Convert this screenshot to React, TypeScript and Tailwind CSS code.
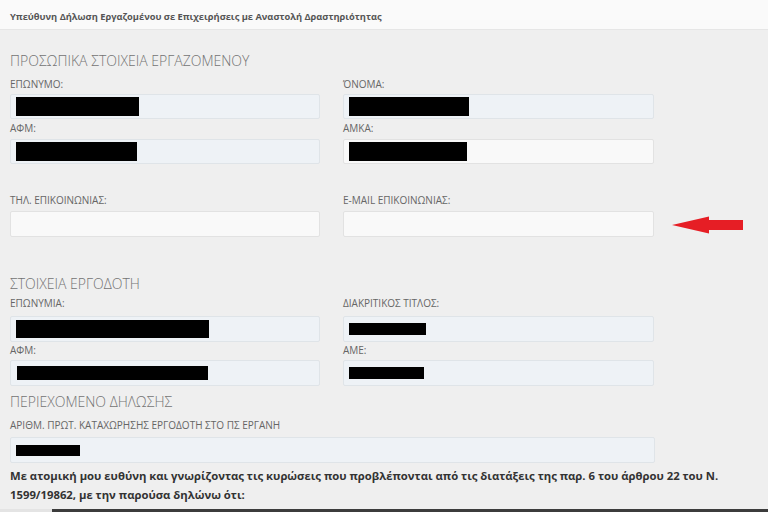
import React from "react";

const font = { fontFamily: '"Open Sans", "Noto Sans", sans-serif' };

function Label({ children, className = "" }: { children: React.ReactNode; className?: string }) {
  return (
    <div className={"text-[10px] leading-[14px] text-[#666] whitespace-nowrap " + className}>{children}</div>
  );
}

function Input({
  blue = true,
  bar,
  barH = "h-[19px]",
  className = "",
}: {
  blue?: boolean;
  bar?: string;
  barH?: string;
  className?: string;
}) {
  return (
    <div
      className={
        "flex items-center pl-[5px] rounded-[2px] border " +
        (blue ? "bg-[#eef2f6] border-[#dfe4e8] " : "bg-[#f9f9f9] border-[#e2e2e2] ") +
        className
      }
    >
      {bar && <div className={"bg-black " + bar + " " + barH} />}
    </div>
  );
}

export default function App() {
  return (
    <div className="w-[768px] h-[512px] overflow-hidden bg-[#efefef] flex flex-col" style={font}>
      <div className="h-[30px] shrink-0 bg-[#fafafa] border-b border-[#e6e6e6] flex items-center pl-[10px] pt-[4px]">
        <span className="text-[9.3px] font-bold text-[#555] whitespace-nowrap">
          Υπεύθυνη Δήλωση Εργαζομένου σε Επιχειρήσεις με Αναστολή Δραστηριότητας
        </span>
      </div>

      <div className="pl-[10px] w-[655px] flex flex-col">
        <div className="mt-[21px] h-[20px] leading-[20px] text-[14px] font-light text-[#737373] whitespace-nowrap">
          ΠΡΟΣΩΠΙΚΑ ΣΤΟΙΧΕΙΑ ΕΡΓΑΖΟΜΕΝΟΥ
        </div>

        <div className="grid grid-cols-[310px_311px] gap-x-[23px]">
          <div className="flex flex-col">
            <Label className="mt-[6px]">ΕΠΩΝΥΜΟ:</Label>
            <Input className="mt-[3px] h-[25px]" bar="w-[123px]" />
            <Label className="mt-[2px]">ΑΦΜ:</Label>
            <Input className="mt-[4px] h-[25px]" bar="w-[121px]" />
            <Label className="mt-[29px]">ΤΗΛ. ΕΠΙΚΟΙΝΩΝΙΑΣ:</Label>
            <Input className="mt-[4px] h-[26px]" blue={false} />
          </div>
          <div className="flex flex-col">
            <Label className="mt-[6px]">ΌΝΟΜΑ:</Label>
            <Input className="mt-[3px] h-[25px] pl-[4px]" bar="w-[120px]" />
            <Label className="mt-[2px]">ΑΜΚΑ:</Label>
            <Input className="mt-[4px] h-[25px] pl-[4px]" bar="w-[118px]" blue={false} />
            <Label className="mt-[29px]">E-MAIL ΕΠΙΚΟΙΝΩΝΙΑΣ:</Label>
            <div className="relative mt-[4px]">
              <Input className="h-[26px]" blue={false} />
              <svg
                className="absolute left-[329px] top-[5px]"
                width="72"
                height="18"
                viewBox="0 0 72 18"
              >
                <path d="M0 9 L37 0.5 L37 4 L71 4 L71 14 L37 14 L37 17.5 Z" fill="#e61e25" />
              </svg>
            </div>
          </div>
        </div>

        <div className="mt-[37px] h-[20px] leading-[20px] text-[14px] font-light text-[#737373] whitespace-nowrap">
          ΣΤΟΙΧΕΙΑ ΕΡΓΟΔΟΤΗ
        </div>

        <div className="grid grid-cols-[310px_311px] gap-x-[23px]">
          <div className="flex flex-col">
            <Label className="mt-[2px]">ΕΠΩΝΥΜΙΑ:</Label>
            <Input className="mt-[6px] h-[26px]" bar="w-[193px]" barH="h-[18px]" />
            <Label className="mt-[1px]">ΑΦΜ:</Label>
            <Input className="mt-[3px] h-[26px] pl-[6px]" bar="w-[191px]" barH="h-[14px]" />
          </div>
          <div className="flex flex-col">
            <Label className="mt-[2px]">ΔΙΑΚΡΙΤΙΚΟΣ ΤΙΤΛΟΣ:</Label>
            <Input className="mt-[6px] h-[26px] pl-[4px]" bar="w-[77px]" barH="h-[12px]" />
            <Label className="mt-[1px]">ΑΜΕ:</Label>
            <Input className="mt-[3px] h-[26px] pl-[5px]" bar="w-[75px]" barH="h-[12px]" />
          </div>
        </div>

        <div className="mt-[6px] h-[20px] leading-[20px] text-[14px] font-light text-[#737373] whitespace-nowrap">
          ΠΕΡΙΕΧΟΜΕΝΟ ΔΗΛΩΣΗΣ
        </div>
        <Label className="mt-[6px] text-[9.5px]">ΑΡΙΘΜ. ΠΡΩΤ. ΚΑΤΑΧΩΡΗΣΗΣ ΕΡΓΟΔΟΤΗ ΣΤΟ ΠΣ ΕΡΓΑΝΗ</Label>
        <Input className="mt-[5px] h-[26px]" bar="w-[64px]" barH="h-[11px]" />
      </div>

      <div className="pl-[10px] mt-[3px] text-[11.3px] leading-[19px] font-bold text-[#333] w-[760px]">
        <div className="whitespace-nowrap">
          Με ατομική μου ευθύνη και γνωρίζοντας τις κυρώσεις που προβλέπονται από τις διατάξεις της παρ. 6 του άρθρου 22 του Ν.
        </div>
        <div className="whitespace-nowrap">1599/19862, με την παρούσα δηλώνω ότι:</div>
      </div>

      <div className="mt-auto h-[3px] flex shrink-0">
        <div className="w-[52px] bg-[#e4e4e4]" />
        <div className="flex-1 bg-[#3c3c3c]" />
      </div>
    </div>
  );
}
